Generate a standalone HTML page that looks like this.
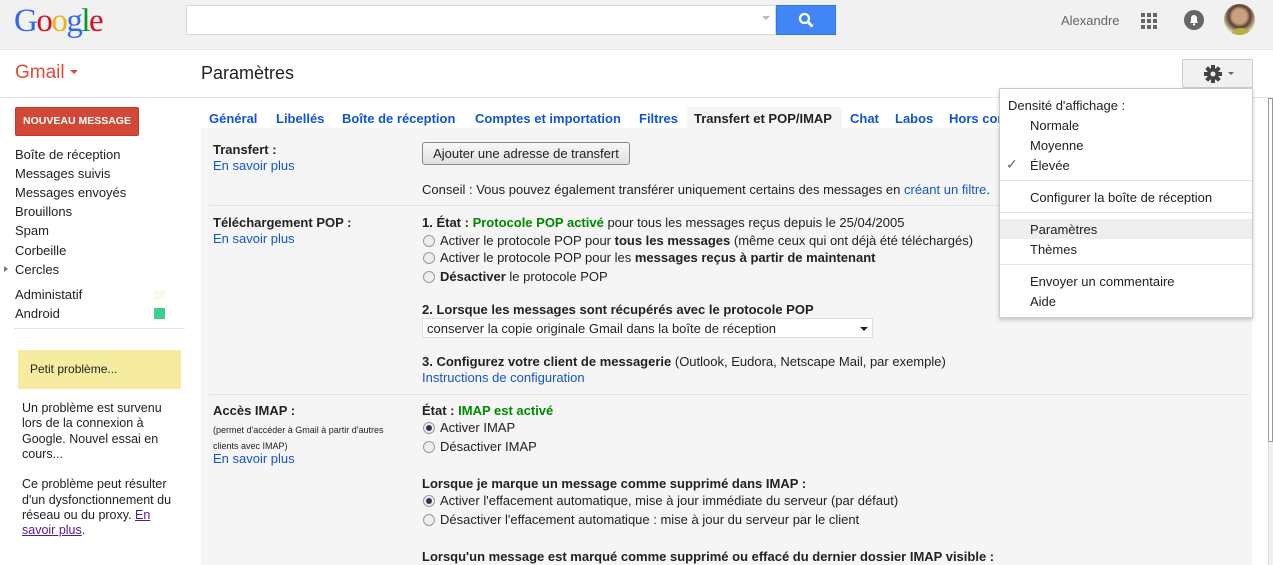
<!DOCTYPE html>
<html><head><meta charset="utf-8"><style>
*{margin:0;padding:0;box-sizing:border-box}
body{width:1273px;height:565px;overflow:hidden;background:#fff;font-family:"Liberation Sans",Arial,sans-serif;font-size:13px;color:#222;position:relative}
.a{position:absolute;white-space:nowrap}
.l{color:#15c}
.b{font-weight:bold}
.g{color:#080}
.sm{font-size:13px;letter-spacing:0}
.r{display:inline-block;width:12px;height:12px;border:1px solid #999;border-radius:50%;background:#eee;vertical-align:-2px;margin-right:5px}
.r.on::after{content:"";display:block;width:6px;height:6px;border-radius:50%;background:#335;margin:2px}
.nav{position:absolute;left:15px;font-size:13px;color:#222}
.mi{position:absolute;left:1030px;font-size:13px;color:#222}
</style></head><body>
<div class="a" style="left:0;top:0;width:1273px;height:50px;background:#f1f1f1;border-bottom:1px solid #e5e5e5"></div>
<div class="a" style="left:14px;top:2px;font-family:'Liberation Serif',serif;font-size:33px;letter-spacing:-1.5px;line-height:38px"><span style="color:#3369e8">G</span><span style="color:#d50f25">o</span><span style="color:#eeb211">o</span><span style="color:#3369e8">g</span><span style="color:#009925">l</span><span style="color:#d50f25">e</span></div>
<div class="a" style="left:186px;top:5px;width:590px;height:30px;background:#fff;border:1px solid #d9d9d9"></div>
<div class="a" style="left:762px;top:16px;width:0;height:0;border-left:4px solid transparent;border-right:4px solid transparent;border-top:4px solid #bbb"></div>
<div class="a" style="left:776px;top:5px;width:60px;height:30px;background:#4285f4;border:1px solid #3079ed"></div>
<svg class="a" style="left:798px;top:12px" width="16" height="16" viewBox="0 0 16 16"><circle cx="6.5" cy="6.5" r="4.5" fill="none" stroke="#fff" stroke-width="2.2"/><path d="M10 10 L14.5 14.5" stroke="#fff" stroke-width="2.8"/></svg>
<div class="a" style="left:1061px;top:13px;color:#666;font-size:13px">Alexandre</div>
<svg class="a" style="left:1141px;top:13px" width="16" height="16"><g fill="#666"><rect x="0" y="0" width="4" height="4"/><rect x="6" y="0" width="4" height="4"/><rect x="12" y="0" width="4" height="4"/><rect x="0" y="6" width="4" height="4"/><rect x="6" y="6" width="4" height="4"/><rect x="12" y="6" width="4" height="4"/><rect x="0" y="12" width="4" height="4"/><rect x="6" y="12" width="4" height="4"/><rect x="12" y="12" width="4" height="4"/></g></svg>
<svg class="a" style="left:1184px;top:10px" width="20" height="20"><circle cx="10" cy="10" r="10" fill="#666"/><path d="M6 13h8l-1-2V8a3 3 0 0 0-6 0v3z" fill="#fff"/><circle cx="10" cy="14.5" r="1.2" fill="#fff"/></svg>
<div class="a" style="left:1224px;top:4px;width:31px;height:31px;border-radius:50%;background:radial-gradient(circle at 50% 40%,#c9a080 0 30%,#5a4030 45%,#d8d0b0 70%);overflow:hidden"><div style="position:absolute;left:8px;top:24px;width:18px;height:10px;background:#b8b040;border-radius:50%"></div></div>
<div class="a" style="left:0;top:97px;width:1273px;height:1px;background:#e5e5e5"></div>
<div class="a" style="left:15px;top:62px;font-size:19px;color:#dd4b39">Gmail <span style="display:inline-block;border-left:4px solid transparent;border-right:4px solid transparent;border-top:4px solid #dd4b39;vertical-align:4px"></span></div>
<div class="a" style="left:201px;top:63px;font-size:18px;color:#222">Paramètres</div>
<div class="a" style="left:1182px;top:59px;width:71px;height:29px;background:#f1f1f1;border:1px solid #ccc;border-radius:2px"></div>
<svg class="a" style="left:1203px;top:64px" width="20" height="20" viewBox="0 0 20 20"><g fill="#444"><circle cx="10" cy="10" r="6"/><rect x="8" y="1" width="4" height="18"/><rect x="1" y="8" width="18" height="4"/><rect x="8" y="1" width="4" height="18" transform="rotate(45 10 10)"/><rect x="8" y="1" width="4" height="18" transform="rotate(-45 10 10)"/></g><circle cx="10" cy="10" r="2.5" fill="#f1f1f1"/></svg>
<div class="a" style="left:1228px;top:72px;border-left:3px solid transparent;border-right:3px solid transparent;border-top:3px solid #666"></div>
<div class="a" style="left:15px;top:107px;width:124px;height:29px;background:#d14836;border:1px solid #c53727;border-radius:2px;color:#fff;font-weight:bold;font-size:10.5px;text-align:center;line-height:27px">NOUVEAU MESSAGE</div>
<div class="nav" style="top:147px">Boîte de réception</div>
<div class="nav" style="top:166px">Messages suivis</div>
<div class="nav" style="top:185px">Messages envoyés</div>
<div class="nav" style="top:204px">Brouillons</div>
<div class="nav" style="top:223px">Spam</div>
<div class="nav" style="top:243px">Corbeille</div>
<div class="nav" style="top:262px">Cercles</div>
<div class="a" style="left:4px;top:266px;border-top:3px solid transparent;border-bottom:3px solid transparent;border-left:4px solid #777"></div>
<div class="nav" style="top:287px">Administatif</div>
<div class="a" style="left:154px;top:290px;width:11px;height:10px;background:#f4fbef"></div>
<div class="nav" style="top:306px">Android</div>
<div class="a" style="left:154px;top:308px;width:11px;height:11px;background:#3dd08a"></div>
<div class="a" style="left:14px;top:328px;width:171px;height:1px;background:#e5e5e5"></div>
<div class="a" style="left:18px;top:350px;width:163px;height:39px;background:#f5eca0"></div>
<div class="a" style="left:30px;top:362px;font-size:12px">Petit problème...</div>
<div class="a" style="left:22px;top:401px;font-size:12.5px;line-height:15.3px;white-space:normal;width:150px">Un problème est survenu lors de la connexion à Google. Nouvel essai en cours...<br><br>Ce problème peut résulter d'un dysfonctionnement du réseau ou du proxy. <u style="color:#551a8b">En savoir plus</u>.</div>
<div class="a b" style="left:209px;top:111px;color:#15c">Général</div>
<div class="a b" style="left:276px;top:111px;color:#15c">Libellés</div>
<div class="a b" style="left:342px;top:111px;color:#15c">Boîte de réception</div>
<div class="a b" style="left:475px;top:111px;color:#15c">Comptes et importation</div>
<div class="a b" style="left:639px;top:111px;color:#15c">Filtres</div>
<div class="a" style="left:687px;top:107px;width:155px;height:22px;background:#f5f5f5"></div>
<div class="a b" style="left:694px;top:111px;color:#222">Transfert et POP/IMAP</div>
<div class="a b" style="left:850px;top:111px;color:#15c">Chat</div>
<div class="a b" style="left:895px;top:111px;color:#15c">Labos</div>
<div class="a b" style="left:949px;top:111px;color:#15c">Hors con</div>
<div class="a" style="left:201px;top:128px;width:1051px;height:437px;background:#f5f5f5"></div>
<div class="a" style="left:209px;top:205px;width:1040px;height:1px;background:#e3e3e3"></div>
<div class="a" style="left:209px;top:394px;width:1040px;height:1px;background:#e3e3e3"></div>
<div class="a b" style="left:213px;top:142px">Transfert :</div>
<div class="a l" style="left:213px;top:158px">En savoir plus</div>
<div class="a" style="left:422px;top:142px;width:208px;height:23px;background:linear-gradient(#f8f8f8,#e0e0e0);border:1px solid #888;border-radius:3px;font-size:13px;text-align:center;line-height:21px">Ajouter une adresse de transfert</div>
<div class="a sm" style="left:422px;top:182px">Conseil : Vous pouvez également transférer uniquement certains des messages en <span class="l">créant un filtre</span>.</div>
<div class="a b" style="left:213px;top:215px">Téléchargement POP :</div>
<div class="a l" style="left:213px;top:231px">En savoir plus</div>
<div class="a sm" style="left:422px;top:215px"><b>1. État : </b><b class="g">Protocole POP activé</b> pour tous les messages reçus depuis le 25/04/2005</div>
<div class="a sm" style="left:423px;top:233px"><span class="r"></span>Activer le protocole POP pour <b>tous les messages</b> (même ceux qui ont déjà été téléchargés)</div>
<div class="a sm" style="left:423px;top:250px"><span class="r"></span>Activer le protocole POP pour les <b>messages reçus à partir de maintenant</b></div>
<div class="a sm" style="left:423px;top:269px"><span class="r"></span><b>Désactiver</b> le protocole POP</div>
<div class="a sm b" style="left:422px;top:302px">2. Lorsque les messages sont récupérés avec le protocole POP</div>
<div class="a sm" style="left:422px;top:318px;width:451px;height:20px;background:#fff;border:1px solid #ddd;padding:2px 4px">conserver la copie originale Gmail dans la boîte de réception</div>
<div class="a" style="left:860px;top:327px;border-left:4px solid transparent;border-right:4px solid transparent;border-top:4px solid #222"></div>
<div class="a sm" style="left:422px;top:354px"><b>3. Configurez votre client de messagerie</b> (Outlook, Eudora, Netscape Mail, par exemple)</div>
<div class="a sm l" style="left:422px;top:370px">Instructions de configuration</div>
<div class="a b" style="left:213px;top:403px">Accès IMAP :</div>
<div class="a" style="left:213px;top:422px;font-size:9px;line-height:16px">(permet d'accéder à Gmail à partir d'autres<br>clients avec IMAP)</div>
<div class="a l" style="left:213px;top:451px">En savoir plus</div>
<div class="a sm" style="left:422px;top:403px"><b>État : </b><b class="g">IMAP est activé</b></div>
<div class="a sm" style="left:423px;top:420px"><span class="r on"></span>Activer IMAP</div>
<div class="a sm" style="left:423px;top:439px"><span class="r"></span>Désactiver IMAP</div>
<div class="a sm b" style="left:422px;top:476px">Lorsque je marque un message comme supprimé dans IMAP :</div>
<div class="a sm" style="left:423px;top:493px"><span class="r on"></span>Activer l'effacement automatique, mise à jour immédiate du serveur (par défaut)</div>
<div class="a sm" style="left:423px;top:512px"><span class="r"></span>Désactiver l'effacement automatique : mise à jour du serveur par le client</div>
<div class="a sm b" style="left:422px;top:549px">Lorsqu'un message est marqué comme supprimé ou effacé du dernier dossier IMAP visible :</div>
<div class="a" style="left:1268px;top:98px;width:5px;height:467px;background:#f0f0f0;border-left:1px solid #ddd"></div>
<div class="a" style="left:1268px;top:98px;width:5px;height:344px;background:#fff;border:1px solid #999"></div>
<div class="a" style="left:999px;top:88px;width:254px;height:230px;background:#fff;border:1px solid #ccc;box-shadow:0 2px 4px rgba(0,0,0,.2)"></div>
<div class="a" style="left:1008px;top:98px">Densité d'affichage :</div>
<div class="mi" style="top:118px">Normale</div>
<div class="mi" style="top:138px">Moyenne</div>
<div class="a" style="left:1006px;top:156px;color:#666;font-size:14px">✓</div>
<div class="mi" style="top:158px">Élevée</div>
<div class="a" style="left:1000px;top:180px;width:252px;height:1px;background:#e5e5e5"></div>
<div class="mi" style="top:190px">Configurer la boîte de réception</div>
<div class="a" style="left:1000px;top:212px;width:252px;height:1px;background:#e5e5e5"></div>
<div class="a" style="left:1000px;top:219px;width:252px;height:20px;background:#eee"></div>
<div class="mi" style="top:222px">Paramètres</div>
<div class="mi" style="top:242px">Thèmes</div>
<div class="a" style="left:1000px;top:264px;width:252px;height:1px;background:#e5e5e5"></div>
<div class="mi" style="top:274px">Envoyer un commentaire</div>
<div class="mi" style="top:294px">Aide</div>
</body></html>
